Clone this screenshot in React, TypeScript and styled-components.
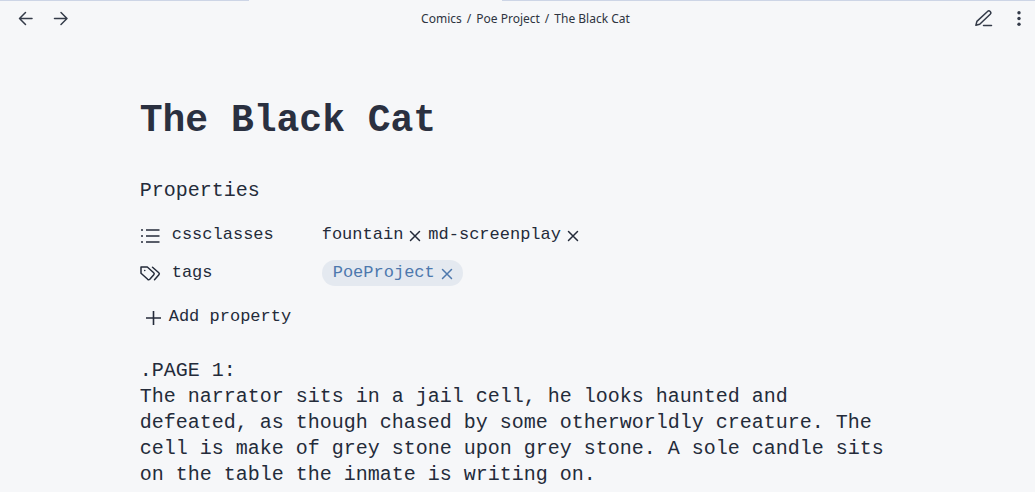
import React from "react";
import styled, { createGlobalStyle } from "styled-components";

const GlobalStyle = createGlobalStyle`
  *, *::before, *::after { box-sizing: border-box; }
  body {
    margin: 0;
    background: #f6f7f9;
    color: #242b3a;
    font-family: "Liberation Mono", monospace;
  }
`;

const Page = styled.div`
  min-height: 100vh;
`;

const TabEdge = styled.div`
  display: grid;
  grid-template-columns: 249fr 253fr 533fr;
  height: 1px;
`;

const EdgeLine = styled.span<{ $active?: boolean }>`
  background: ${(p) => (p.$active ? "transparent" : "#cdd5e6")};
`;

const Header = styled.header`
  display: grid;
  grid-template-columns: 1fr auto 1fr;
  align-items: center;
  height: 36px;
  padding: 0 7px 0 16px;
`;

const HeaderGroup = styled.div<{ $end?: boolean }>`
  display: flex;
  gap: ${(p) => (p.$end ? "14px" : "15px")};
  justify-content: ${(p) => (p.$end ? "flex-end" : "flex-start")};
`;

const IconButton = styled.button`
  display: flex;
  align-items: center;
  justify-content: center;
  width: 20px;
  height: 20px;
  padding: 0;
  border: 0;
  background: none;
  color: #343b49;
  cursor: pointer;
`;

const Breadcrumb = styled.nav`
  display: flex;
  gap: 5px;
  padding-left: 7px;
  font: 12px/20px "Noto Sans", sans-serif;
  color: #2e3440;
`;

const Crumb = styled.a`
  color: inherit;
  text-decoration: none;
`;

const Note = styled.main`
  width: 73%;
  min-width: 320px;
  margin: 0 auto;
  padding: 60px 0 0;
`;

const Title = styled.h1`
  margin: 0;
  font-size: 38px;
  line-height: 48px;
  font-weight: 700;
  color: #2a3040;
`;

const Properties = styled.section`
  margin-top: 33px;
`;

const SectionTitle = styled.h2`
  margin: 0 0 12px;
  font-size: 20px;
  line-height: 26px;
  font-weight: 400;
`;

const PropertyRow = styled.div`
  display: grid;
  grid-template-columns: 182px 1fr;
  align-items: center;
  height: 38px;
  font-size: 17px;
  line-height: 26px;
`;

const PropertyName = styled.div`
  display: flex;
  align-items: center;
  gap: 11px;
`;

const Values = styled.div`
  display: flex;
  align-items: center;
  gap: 7px;
`;

const Pill = styled.span<{ $tag?: boolean }>`
  display: flex;
  align-items: center;
  gap: 6px;
  ${(p) =>
    p.$tag &&
    `
    padding: 0 10px 0 11px;
    border-radius: 13px;
    background: #e4e9f0;
    color: #4d78ad;
  `}
`;

const PillText = styled.span`
  line-height: 26px;
`;

const RemoveButton = styled.button`
  display: flex;
  padding: 2px 0 0;
  border: 0;
  background: none;
  color: inherit;
  cursor: pointer;
`;

const AddButton = styled.button`
  display: flex;
  align-items: center;
  gap: 8px;
  margin-top: 12px;
  padding: 0 6px;
  border: 0;
  background: none;
  color: inherit;
  font: 17px/26px "Liberation Mono", monospace;
  cursor: pointer;
`;

const Script = styled.article`
  margin-top: 28px;
  padding-bottom: 4px;
  font-size: 20px;
  line-height: 26px;
`;

const Paragraph = styled.p`
  margin: 0;
`;

const stroke = {
  fill: "none",
  stroke: "currentColor",
  strokeWidth: 1.6,
  strokeLinecap: "round" as const,
  strokeLinejoin: "round" as const,
  "aria-hidden": true,
};

const ArrowIcon = ({ right }: { right?: boolean }) => (
  <svg width="20" height="20" viewBox="0 0 20 20" {...stroke} strokeWidth={1.5}>
    <path d={right ? "M3.500 9.500h12.500M10 3.500l6 6-6 6" : "M16 9.500H3.500M9.500 3.500l-6 6 6 6"} />
  </svg>
);

const PenIcon = () => (
  <svg width="20" height="20" viewBox="0 0 20 20" {...stroke} strokeWidth={1.5}>
    <path d="M13.500 2.500a1.900 1.900 0 0 1 2.700 2.700L5.700 15.200l-3.800 1 1-3.800z" />
    <path d="M9.500 16.500h8" />
  </svg>
);

const MoreIcon = () => (
  <svg width="20" height="20" viewBox="0 0 20 20" fill="currentColor" aria-hidden>
    <circle cx="11" cy="3.700" r="1.700" />
    <circle cx="11" cy="9.500" r="1.700" />
    <circle cx="11" cy="15.300" r="1.700" />
  </svg>
);

const ListIcon = () => (
  <svg width="21" height="18" viewBox="0 0 21 18" {...stroke} strokeLinecap="butt">
    <path d="M6 4h13.500M6 10h13.500M6 16h13.500" />
    <path d="M1 4h2M1 10h2M1 16h2" />
  </svg>
);

const TagsIcon = () => (
  <svg width="21" height="18" viewBox="0 0 21 18" {...stroke} strokeWidth={1.5}>
    <path d="M1 3h6.300l6.400 5.700q1 1 .1 2l-4 4.500q-1 1-2.100.1L1 9.300z" />
    <path d="M12.500 3.300l6.300 5.500q1 1 .1 2L14.500 15.800" />
    <path d="M4.700 6.500h.1" />
  </svg>
);

const CloseIcon = () => (
  <svg width="12" height="12" viewBox="0 0 12 12" {...stroke} strokeWidth={1.5}>
    <path d="M1.500 1.500l9 9M10.500 1.500l-9 9" />
  </svg>
);

const PlusIcon = () => (
  <svg width="15" height="16" viewBox="0 0 15 16" {...stroke} strokeLinecap="butt">
    <path d="M0 9h15M7.500 2v14" />
  </svg>
);

const Value = ({ text, tag }: { text: string; tag?: boolean }) => (
  <Pill $tag={tag}>
    <PillText>{text}</PillText>
    <RemoveButton type="button" aria-label={`Remove ${text}`}>
      <CloseIcon />
    </RemoveButton>
  </Pill>
);

export default function App() {
  return (
    <Page>
      <GlobalStyle />
      <TabEdge>
        <EdgeLine />
        <EdgeLine $active />
        <EdgeLine />
      </TabEdge>
      <Header>
        <HeaderGroup>
          <IconButton type="button" aria-label="Back">
            <ArrowIcon />
          </IconButton>
          <IconButton type="button" aria-label="Forward">
            <ArrowIcon right />
          </IconButton>
        </HeaderGroup>
        <Breadcrumb aria-label="Breadcrumb">
          <Crumb href="#comics">Comics</Crumb>
          <span>/</span>
          <Crumb href="#poe-project">Poe Project</Crumb>
          <span>/</span>
          <span>The Black Cat</span>
        </Breadcrumb>
        <HeaderGroup $end>
          <IconButton type="button" aria-label="Edit">
            <PenIcon />
          </IconButton>
          <IconButton type="button" aria-label="More options">
            <MoreIcon />
          </IconButton>
        </HeaderGroup>
      </Header>
      <Note>
        <Title>The Black Cat</Title>
        <Properties>
          <SectionTitle>Properties</SectionTitle>
          <PropertyRow>
            <PropertyName>
              <ListIcon />
              cssclasses
            </PropertyName>
            <Values>
              <Value text="fountain" />
              <Value text="md-screenplay" />
            </Values>
          </PropertyRow>
          <PropertyRow>
            <PropertyName>
              <TagsIcon />
              tags
            </PropertyName>
            <Values>
              <Value text="PoeProject" tag />
            </Values>
          </PropertyRow>
          <AddButton type="button">
            <PlusIcon />
            Add property
          </AddButton>
        </Properties>
        <Script>
          <Paragraph>.PAGE 1:</Paragraph>
          <Paragraph>
            The narrator sits in a jail cell, he looks haunted and defeated, as though chased by
            some otherworldly creature. The cell is make of grey stone upon grey stone. A sole
            candle sits on the table the inmate is writing on.
          </Paragraph>
        </Script>
      </Note>
    </Page>
  );
}
